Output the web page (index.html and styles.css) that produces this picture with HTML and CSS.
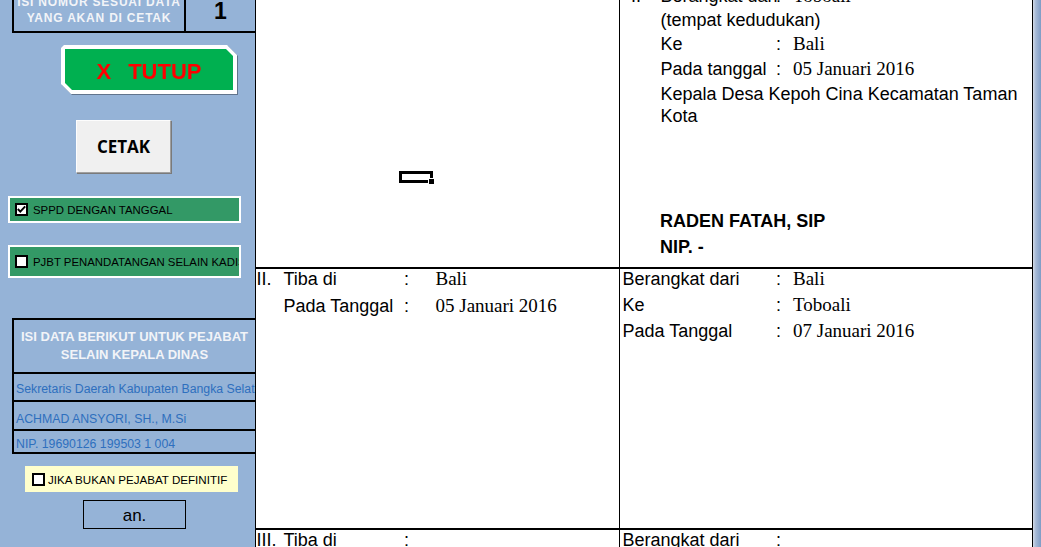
FILE: index.html
```html
<!DOCTYPE html>
<html lang="id">
<head>
<meta charset="utf-8">
<title>SPPD</title>
<link rel="stylesheet" href="styles.css">
</head>
<body>
<div class="app">
  <aside class="panel">
    <div class="hdr">
      <div class="hdr-label"><div>ISI NOMOR SESUAI DATA<br>YANG AKAN DI CETAK</div></div>
      <div class="hdr-num">1</div>
    </div>
    <div class="tutup-wrap">
      <div class="tutup"><div class="tutup-face"><span>X</span><span>TUTUP</span></div></div>
    </div>
    <div class="cetak">CETAK</div>
    <div class="chk chk1">
      <span class="box"><svg viewBox="0 0 9 9" width="9" height="9"><polyline points="0.8,4 3.3,6.6 8.2,1.4" fill="none" stroke="#000" stroke-width="2"/></svg></span>
      <span class="chk-text">SPPD DENGAN TANGGAL</span>
    </div>
    <div class="chk chk2">
      <span class="box"></span>
      <span class="chk-text">PJBT PENANDATANGAN SELAIN KADIS</span>
    </div>
    <div class="databox">
      <div class="db-head"><div>ISI DATA BERIKUT UNTUK PEJABAT<br>SELAIN KEPALA DINAS</div></div>
      <div class="db-row r1">Sekretaris Daerah Kabupaten Bangka Selatan</div>
      <div class="db-row r2">ACHMAD ANSYORI, SH., M.Si</div>
      <div class="db-row r3">NIP. 19690126 199503 1 004</div>
    </div>
    <div class="yellow">
      <span class="box"></span>
      <span class="chk-text">JIKA BUKAN PEJABAT DEFINITIF</span>
    </div>
    <div class="an">an.</div>
  </aside>

  <main class="doc">
    <div class="row row1">
      <div class="cell-l">
        <div class="sel"><span class="handle"></span></div>
      </div>
      <div class="cell-r r1-cell">
        <div class="f1">
          <span>I.</span><span>Berangkat dari</span><span>:</span><span class="v">Toboali</span>
          <span></span><span class="span3">(tempat kedudukan)</span>
          <span></span><span>Ke</span><span>:</span><span class="v">Bali</span>
          <span></span><span>Pada tanggal</span><span>:</span><span class="v">05 Januari 2016</span>
          <span></span><span class="span3 wrap">Kepala Desa Kepoh Cina Kecamatan Taman Kota</span>
        </div>
        <div class="sig">
          <div>RADEN FATAH, SIP</div>
          <div>NIP. -</div>
        </div>
      </div>
    </div>

    <div class="row row2">
      <div class="cell-l">
        <div class="fl">
          <span>II.</span><span>Tiba di</span><span>:</span><span class="v">Bali</span>
          <span></span><span>Pada Tanggal</span><span>:</span><span class="v">05 Januari 2016</span>
        </div>
      </div>
      <div class="cell-r">
        <div class="fr">
          <span>Berangkat dari</span><span>:</span><span class="v">Bali</span>
          <span>Ke</span><span>:</span><span class="v">Toboali</span>
          <span>Pada Tanggal</span><span>:</span><span class="v">07 Januari 2016</span>
        </div>
      </div>
    </div>

    <div class="row row3">
      <div class="cell-l">
        <div class="fl">
          <span>III.</span><span>Tiba di</span><span>:</span><span class="v"></span>
        </div>
      </div>
      <div class="cell-r">
        <div class="fr">
          <span>Berangkat dari</span><span>:</span><span class="v"></span>
        </div>
      </div>
    </div>
  </main>

  <div class="edge"></div>
</div>
</body>
</html>
```
FILE: styles.css
```css
* { box-sizing: border-box; }
html, body { margin: 0; padding: 0; }
body {
  width: 1041px;
  height: 547px;
  overflow: hidden;
  background: #fff;
  font-family: "Liberation Sans", Arial, sans-serif;
  color: #000;
}
.app { display: flex; height: 547px; }

/* ---------- left control panel ---------- */
.panel {
  width: 255px;
  flex: none;
  background: #95B3D7;
  display: flex;
  flex-direction: column;
  align-items: flex-start;
  overflow: hidden;
}
.hdr {
  flex: none;
  margin-left: 12px;
  width: 243px;
  height: 33px;
  border-left: 2px solid #000;
  border-bottom: 2px solid #000;
  display: flex;
}
.hdr-label {
  width: 172px;
  border-right: 2px solid #000;
  display: flex;
  align-items: flex-end;
  justify-content: center;
  text-align: center;
  padding-bottom: 5px;
  color: #f2f4f8;
  font-weight: bold;
  font-size: 12px;
  letter-spacing: 0.8px;
  line-height: 16px;
  white-space: nowrap;
}
.hdr-num {
  flex: 1;
  display: flex;
  align-items: flex-end;
  justify-content: center;
  padding-bottom: 7.5px;
  font-weight: bold;
  font-size: 23px;
  line-height: 26px;
}

.tutup-wrap {
  flex: none;
  margin: 12px 0 0 61px;
  filter: drop-shadow(1px 1px 0.6px rgba(0, 0, 0, 0.35));
}
.tutup {
  width: 176px;
  height: 49px;
  padding: 4px;
  background: #fff;
  clip-path: polygon(3px 0, calc(100% - 10px) 0, 100% 10px, 100% 100%, 10px 100%, 0 calc(100% - 10px), 0 3px);
}
.tutup-face {
  height: 100%;
  background: #00B050;
  clip-path: polygon(0 0, calc(100% - 7px) 0, 100% 7px, 100% 100%, 7px 100%, 0 calc(100% - 7px));
  display: flex;
  align-items: center;
  justify-content: center;
  gap: 17px;
  padding-top: 4px;
  color: #ff0000;
  font-weight: bold;
  font-size: 22px;
}

.cetak {
  flex: none;
  margin: 26px 0 0 76px;
  width: 95px;
  height: 53px;
  background: #f0f0f0;
  border: 1px solid;
  border-color: #fdfdfd #a0a0a0 #a0a0a0 #fdfdfd;
  box-shadow: 1px 1px 0 #7a7a7a;
  display: flex;
  align-items: center;
  justify-content: center;
  font-family: "Open Sans", "Liberation Sans", sans-serif;
  font-weight: 700;
  font-size: 17px;
}

.chk {
  flex: none;
  margin-left: 8px;
  width: 233px;
  background: #339966;
  border: 2px solid #fff;
  display: flex;
  align-items: center;
  padding-left: 5px;
  gap: 5px;
  font-size: 11.4px;
  white-space: nowrap;
  overflow: hidden;
}
.chk1 { margin-top: 23px; height: 27px; }
.chk2 { margin-top: 22px; height: 33px; }
.chk-text { flex: none; }

.box {
  flex: none;
  width: 13px;
  height: 13px;
  background: #fff;
  border: 2px solid #000;
  display: flex;
}
.box svg { display: block; }

.databox {
  flex: none;
  margin: 40px 0 0 12px;
  width: 243px;
  border: 2px solid #000;
  border-right: none;
}
.db-head {
  height: 54px;
  border-bottom: 2px solid #000;
  display: flex;
  align-items: center;
  justify-content: center;
  text-align: center;
  color: #f2f4f8;
  font-weight: bold;
  font-size: 13px;
  line-height: 17.6px;
}
.db-row {
  display: flex;
  align-items: flex-end;
  padding-left: 2px;
  color: #2E6FBE;
  font-size: 12.3px;
  line-height: 14px;
  white-space: nowrap;
  overflow: hidden;
  border-bottom: 2px solid #000;
}
.db-row.r1 { height: 28px; padding-bottom: 4px; }
.db-row.r2 { height: 29px; padding-bottom: 3.5px; }
.db-row.r3 { height: 21px; padding-bottom: 1.5px; border-bottom: none; }

.yellow {
  flex: none;
  margin: 12px 0 0 25px;
  width: 213px;
  height: 26px;
  background: #FFFFCC;
  display: flex;
  align-items: center;
  padding-left: 7px;
  gap: 3px;
  font-size: 11.6px;
  white-space: nowrap;
}

.an {
  flex: none;
  margin: 8px 0 0 83px;
  width: 103px;
  height: 29px;
  border: 1px solid #000;
  display: flex;
  align-items: center;
  justify-content: center;
  padding-top: 3px;
  font-size: 17px;
}

/* ---------- document ---------- */
.doc {
  flex: none;
  width: 778px;
  border-left: 1px solid #000;
  border-right: 1px solid #000;
  background: #fff;
  display: flex;
  flex-direction: column;
  font-size: 18px;
}
.row {
  flex: none;
  display: flex;
  border-bottom: 2px solid #000;
}
.row1 { height: 269px; }
.row2 { height: 261px; }
.row3 { flex: 1; border-bottom: none; }

.cell-l {
  width: 364px;
  flex: none;
  border-right: 1px solid #000;
  position: relative;
}
.cell-r { flex: 1; min-width: 0; }

.f1 > span, .fl > span, .fr > span { white-space: nowrap; }

.v { font-family: "Liberation Serif", "Times New Roman", serif; font-size: 19px; }

.r1-cell { display: flex; flex-direction: column; }
.f1 {
  display: grid;
  grid-template-columns: 29.5px 115.5px 17px 1fr;
  align-items: baseline;
  padding-left: 11px;
  margin-top: -16px;
  line-height: 23.5px;
}
.span3 { grid-column: 2 / 5; }
.f1 > .wrap { white-space: normal; line-height: 22px; margin-top: 1.5px; }
.sig {
  margin-top: auto;
  padding-left: 40px;
  padding-bottom: 7px;
  font-weight: bold;
  line-height: 26px;
}

.fl {
  display: grid;
  grid-template-columns: 27px 120.6px 31.4px 1fr;
  align-items: baseline;
  padding-left: 0.5px;
  line-height: 20px;
  row-gap: 7px;
}
.fr {
  display: grid;
  grid-template-columns: 153.5px 17px 1fr;
  align-items: baseline;
  padding-left: 2.5px;
  line-height: 20px;
  row-gap: 6px;
}

/* Excel cell selection marker */
.sel {
  position: absolute;
  left: 143px;
  top: 171px;
  width: 34px;
  height: 12px;
  border: 3px solid #000;
}
.handle {
  position: absolute;
  left: 27px;
  top: 5px;
  width: 5px;
  height: 5px;
  background: #000;
  box-shadow: -1px -1px 0 #fff;
}

.edge {
  flex: none;
  width: 8px;
  background: linear-gradient(to right, #d3dae6 0%, #a6b9d5 35%, #7f9cc5 100%);
}
```
